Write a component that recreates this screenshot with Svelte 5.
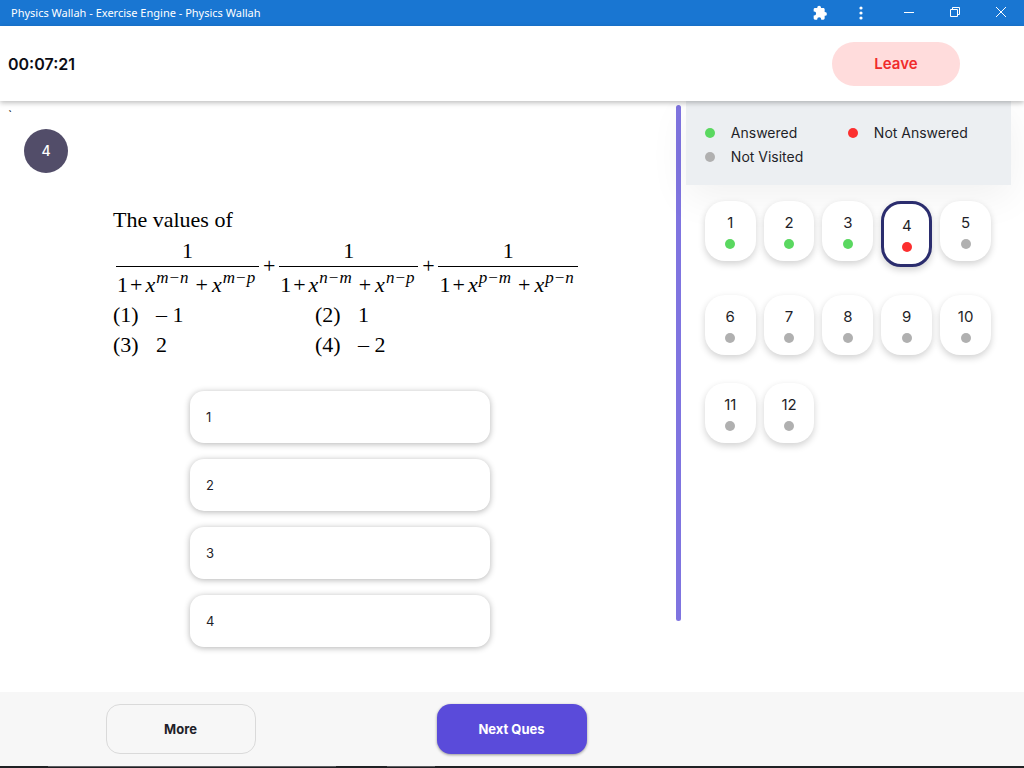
<!--
  Exercise Engine

  Test-taking screen: timer and leave button on top, the current question
  with its answers on the left, question palette on the right.
-->
<script lang="ts">
  type Status = 'answered' | 'not-answered' | 'not-visited';

  interface Question {
    id: number;
    status: Status;
  }

  const legend: { label: string; status: Status }[] = [
    { label: 'Answered', status: 'answered' },
    { label: 'Not Answered', status: 'not-answered' },
    { label: 'Not Visited', status: 'not-visited' }
  ];

  // Exponents used in the denominators of the three fractions
  const fractions = [
    [['m', 'n'], ['m', 'p']],
    [['n', 'm'], ['n', 'p']],
    [['p', 'm'], ['p', 'n']]
  ];

  const choices = [
    { key: '(1)', value: '– 1' },
    { key: '(2)', value: '1' },
    { key: '(3)', value: '2' },
    { key: '(4)', value: '– 2' }
  ];

  const answers = ['1', '2', '3', '4'];

  let current = $state(4);
  let selected = $state<string | null>(null);

  const questions: Question[] = Array.from({ length: 12 }, (_, i) => ({
    id: i + 1,
    status: i < 3 ? 'answered' : i === 3 ? 'not-answered' : 'not-visited'
  }));

  function nextQuestion(): void {
    current = current < questions.length ? current + 1 : 1;
    selected = null;
  }
</script>

{#snippet exponent(pair: string[])}
  <span class="exp"><i>{pair[0]}</i><span class="minus">−</span><i>{pair[1]}</i></span>
{/snippet}

<div class="app">
  <div class="titlebar">
    <span class="title">Physics Wallah - Exercise Engine - Physics Wallah</span>
    <div class="window-buttons">
      <button type="button" class="small" aria-label="Extensions">
        <svg width="16" height="16" viewBox="0 0 24 24" fill="currentColor">
          <path d="M19.500 10.500H19V6.500c0-1.100-.9-2-2-2h-3.500v-.7a2.800 2.800 0 0 0-5.600 0v.7H4.500c-1.100 0-2 .9-2 2v3.300h.7a3 3 0 0 1 0 6h-.7V20c0 1.100.9 2 2 2h3.300v-.7a3 3 0 0 1 6 0v.7H17c1.100 0 2-.9 2-2v-3.800h.5a2.850 2.850 0 0 0 0-5.700z"/>
        </svg>
      </button>
      <button type="button" class="small" aria-label="Menu">
        <svg width="16" height="16" viewBox="0 0 16 16" fill="currentColor">
          <circle cx="8" cy="3" r="1.600"/>
          <circle cx="8" cy="8" r="1.600"/>
          <circle cx="8" cy="13" r="1.600"/>
        </svg>
      </button>
      <button type="button" aria-label="Minimize">
        <svg width="12" height="12" viewBox="0 0 12 12" stroke="currentColor"><path d="M1 5.500h10"/></svg>
      </button>
      <button type="button" aria-label="Restore">
        <svg width="12" height="12" viewBox="0 0 12 12" fill="none" stroke="currentColor">
          <path d="M1.500 2.500h7v7h-7zM3.500 2.500v-2h7v7h-2"/>
        </svg>
      </button>
      <button type="button" aria-label="Close">
        <svg width="12" height="12" viewBox="0 0 12 12" stroke="currentColor"><path d="M1 0l10 10M11 0L1 10"/></svg>
      </button>
    </div>
  </div>

  <header class="header">
    <span class="timer">00:07:21</span>
    <button type="button" class="leave">Leave</button>
  </header>

  <main class="content">
    <section class="question">
      <div class="tick">`</div>
      <div class="number">{current}</div>

      <div class="statement">
        <p>The values of</p>
        <div class="formula">
          {#each fractions as terms, i}
            {#if i > 0}<span class="plus">+</span>{/if}
            <div class="fraction">
              <span class="numerator">1</span>
              <span class="denominator">
                <span>1</span><span class="op">+</span><i>x</i>{@render exponent(terms[0])}<span class="op wide">+</span><i>x</i>{@render exponent(terms[1])}
              </span>
            </div>
          {/each}
        </div>
        <div class="choices">
          {#each choices as choice}
            <span>{choice.key}</span>
            <span>{choice.value}</span>
          {/each}
        </div>
      </div>

      <div class="answers">
        {#each answers as answer}
          <button
            type="button"
            class="answer"
            class:selected={selected === answer}
            onclick={() => selected = answer}
          >{answer}</button>
        {/each}
      </div>
    </section>

    <div class="divider"></div>

    <aside class="palette">
      <ul class="legend">
        {#each legend as item}
          <li><span class="dot {item.status}"></span>{item.label}</li>
        {/each}
      </ul>
      <div class="grid">
        {#each questions as question (question.id)}
          <button
            type="button"
            class="chip"
            class:current={question.id === current}
            onclick={() => current = question.id}
          >
            <span>{question.id}</span>
            <span class="dot {question.status}"></span>
          </button>
        {/each}
      </div>
    </aside>
  </main>

  <footer class="footer">
    <div class="actions">
      <button type="button" class="more">More</button>
      <button type="button" class="next" onclick={nextQuestion}>Next Ques</button>
    </div>
  </footer>

  <div class="taskbar"><span class="first"></span><span class="second"></span></div>
</div>

<style>
  :global(body) {
    margin: 0;
    background: #fff;
  }

  .app {
    display: flex;
    flex-direction: column;
    min-height: 100vh;
    font-family: Inter, 'Liberation Sans', sans-serif;
    color: #1f1f29;
  }

  button {
    padding: 0;
    border: none;
    background: none;
    font-family: inherit;
    color: inherit;
    cursor: pointer;
  }

  .titlebar {
    display: flex;
    justify-content: space-between;
    align-items: center;
    height: 26px;
    padding-left: 11px;
    background: #1976d2;
    color: #fff;
  }

  .title {
    font-family: 'Noto Sans', 'Open Sans', sans-serif;
    font-size: 11px;
    line-height: 26px;
  }

  .window-buttons {
    display: flex;
  }

  .window-buttons button {
    display: flex;
    align-items: center;
    justify-content: center;
    width: 46px;
    height: 26px;
  }

  .window-buttons .small {
    width: 32px;
    margin-right: 9px;
  }

  .header {
    position: relative;
    z-index: 1;
    display: flex;
    justify-content: space-between;
    align-items: center;
    height: 75px;
    padding: 0 64px 0 8px;
    box-sizing: border-box;
    background: #fff;
    box-shadow: 0 2px 5px rgba(0, 0, 0, 0.25);
  }

  .timer {
    font-size: 16px;
    font-weight: 600;
    color: #0c0c14;
  }

  .leave {
    width: 128px;
    height: 44px;
    border-radius: 22px;
    background: #ffdcdc;
    font-size: 15px;
    font-weight: 600;
    color: #f02b2b;
  }

  .content {
    display: flex;
    flex: 1;
  }

  .question {
    flex: none;
    width: 66%;
    padding-bottom: 44px;
    box-sizing: border-box;
  }

  .tick {
    height: 28px;
    padding-left: 8px;
    font-size: 13px;
    line-height: 28px;
  }

  .number {
    width: 44px;
    height: 44px;
    margin-left: 24px;
    border-radius: 50%;
    background: #524d69;
    font-size: 14px;
    font-weight: 500;
    line-height: 44px;
    text-align: center;
    color: #fff;
  }

  .statement {
    margin: 32px 0 0 113px;
    font-family: 'Liberation Serif', serif;
    font-size: 22px;
    line-height: 30px;
    color: #000;
  }

  .statement p {
    margin: 0;
  }

  .formula {
    display: flex;
    align-items: center;
    height: 65px;
    padding-left: 3px;
  }

  .plus {
    width: 20px;
    padding-bottom: 3px;
    text-align: center;
  }

  .fraction {
    display: flex;
    flex-direction: column;
  }

  .numerator {
    height: 31px;
    border-bottom: 1px solid #000;
    line-height: 32px;
    text-align: center;
  }

  .denominator {
    display: flex;
    height: 34px;
    padding: 0 4px 0 1px;
    line-height: 36px;
  }

  .op {
    margin: 0 3px 0 2px;
  }

  .op.wide {
    margin: 0 4px 0 7px;
  }

  .exp {
    padding-left: 1px;
    font-size: 17px;
    line-height: 22px;
  }

  .minus {
    margin: 0 1px;
  }

  .choices {
    display: grid;
    grid-template-columns: 43px 159px 43px 1fr;
  }

  .answers {
    display: flex;
    flex-direction: column;
    gap: 16px;
    width: 300px;
    margin: 31px auto 0;
    padding-left: 4px;
  }

  .answer {
    height: 52px;
    padding: 0 16px;
    border-radius: 14px;
    background: #fff;
    box-shadow: 0 1px 6px rgba(0, 0, 0, 0.3);
    font-size: 13px;
    text-align: left;
  }

  .answer.selected {
    box-shadow: 0 0 0 2px #5a4bda;
  }

  .divider {
    flex: none;
    width: 5px;
    margin: 4px 5px 71px 0;
    border-radius: 3px;
    background: #7f74e0;
  }

  .palette {
    flex: 1;
    padding-right: 13px;
  }

  .legend {
    display: grid;
    grid-template-columns: 143px 1fr;
    margin: 0;
    padding: 20px 0 16px 19px;
    list-style: none;
    background: #eceff2;
    box-shadow: 0 12px 40px rgba(0, 0, 0, 0.06);
    font-size: 14px;
    line-height: 24px;
  }

  .legend li {
    display: flex;
    align-items: center;
    gap: 16px;
  }

  .dot {
    width: 10px;
    height: 10px;
    border-radius: 50%;
  }

  .dot.answered {
    background: #5ad860;
  }

  .dot.not-answered {
    background: #fc2f2f;
  }

  .dot.not-visited {
    background: #b0b0b0;
  }

  .grid {
    display: grid;
    grid-template-columns: repeat(5, 1fr);
    align-items: start;
    gap: 28px 8px;
    padding: 16px 20px 0 19px;
  }

  .chip {
    display: flex;
    flex-direction: column;
    align-items: center;
    gap: 5px;
    padding: 11px 0 12px;
    border-radius: 20px;
    background: #fff;
    box-shadow: 0 3px 7px rgba(0, 0, 0, 0.18);
    font-size: 15px;
    line-height: 22px;
  }

  .chip.current {
    border: 3px solid #2b2d6e;
  }

  .footer {
    padding: 12px 15px;
    background: #f7f7f7;
  }

  .actions {
    display: grid;
    grid-template-columns: 1fr 1fr;
    justify-items: center;
    width: 66.6%;
  }

  .actions button {
    width: 150px;
    height: 50px;
    border-radius: 14px;
    font-size: 13px;
    font-weight: 700;
  }

  .actions .more {
    border: 1px solid #dadada;
  }

  .actions .next {
    background: #5a4bda;
    box-shadow: 0 1px 3px rgba(0, 0, 0, 0.4);
    color: #fff;
  }

  .taskbar {
    display: flex;
    height: 2px;
    background: #202124;
  }

  .taskbar span {
    height: 1px;
    background: #5c5c60;
  }

  .taskbar .first {
    width: 288px;
    margin-left: 48px;
  }

  .taskbar .second {
    width: 48px;
    margin-left: 51px;
  }
</style>
